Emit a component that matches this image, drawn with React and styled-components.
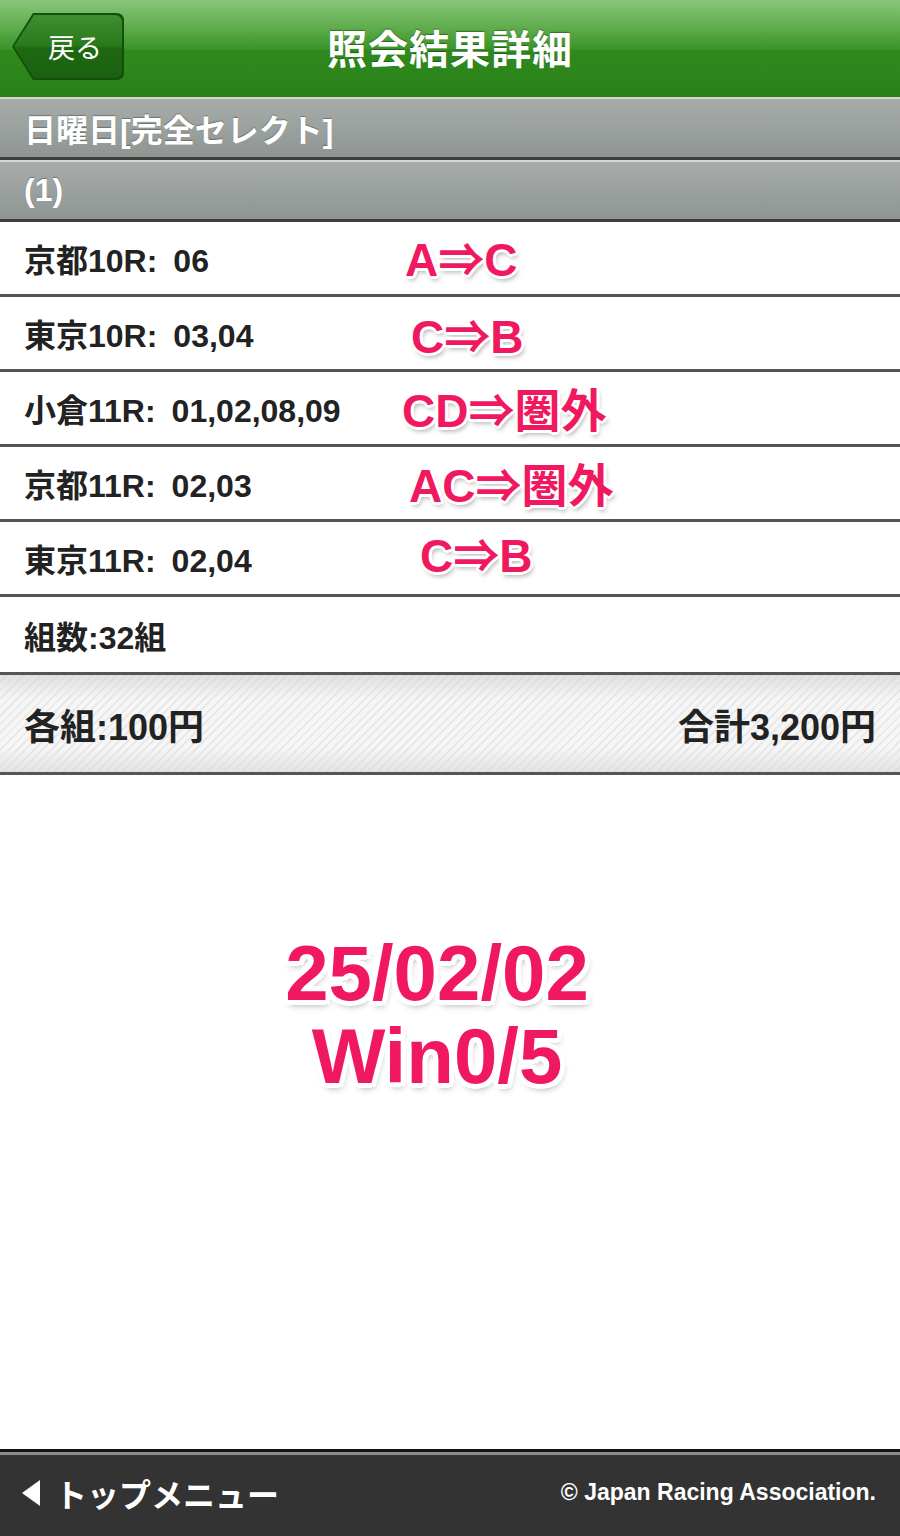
import React from "react";
import styled, { createGlobalStyle } from "styled-components";

const GlobalStyle = createGlobalStyle`
    html, body {
        margin: 0;
        padding: 0;
        background: #fff;
    }
    body {
        font-family: "Liberation Sans", "Noto Sans CJK JP", sans-serif;
        -webkit-font-smoothing: antialiased;
    }
`;

const PINK = "#f0185e";

const Page = styled.div`
    display: flex;
    flex-direction: column;
    min-height: 100vh;
    width: 900px;
    background: #fff;
`;

// header
const Header = styled.header`
    display: grid;
    grid-template-columns: 1fr auto 1fr;
    align-items: center;
    height: 97px;
    padding: 0 12px 4px;
    box-sizing: border-box;
    background: linear-gradient(
        to bottom,
        #8ac57b 0%,
        #5dab4a 30%,
        #3b9529 50%,
        #2f8a1d 52%,
        #2a8118 100%
    );
`;

const BackOuter = styled.div`
    width: 112px;
    height: 67px;
    display: flex;
    background: #144f0b;
    clip-path: path("M21 0 H104 Q112 0 112 8 V59 Q112 67 104 67 H21 L0 33.5 Z");
`;

const BackInner = styled.div`
    margin: 2px;
    flex: 1;
    display: flex;
    align-items: center;
    justify-content: center;
    padding-left: 14px;
    background: linear-gradient(to bottom, #3f8e30 0%, #2a7a1d 48%, #1f6912 52%, #1b6010 100%);
    clip-path: path("M20 0 H100 Q108 0 108 8 V55 Q108 63 100 63 H20 L0 31.5 Z");
    color: #fff;
    font-size: 27px;
    font-weight: normal;
`;

const Title = styled.h1`
    margin: 0;
    color: #fff;
    font-size: 40px;
    font-weight: bold;
    letter-spacing: 1px;
    text-shadow: 0 -1px 1px rgba(0, 0, 0, 0.35);
`;

// grey section bars
const Section = styled.div`
    display: flex;
    align-items: center;
    height: ${(p) => p.$h}px;
    padding-left: 24px;
    border-top: 2px solid #d3d6d4;
    border-bottom: 3px solid #3e3e3e;
    background: linear-gradient(to bottom, #a7aca9, #8f9692);
    color: #fff;
    font-size: 32px;
    font-weight: bold;
    text-shadow: 0 -1px 1px rgba(0, 0, 0, 0.3);
`;

// result rows
const Row = styled.div`
    display: grid;
    grid-template-columns: 378px 1fr;
    align-items: center;
    height: ${(p) => p.$h || 72}px;
    padding-left: 24px;
    border-bottom: 3px solid #555;
    color: #222;
    font-size: 32px;
    font-weight: bold;
`;

const Note = styled.span`
    color: ${PINK};
    font-size: 46px;
    font-weight: bold;
    white-space: nowrap;
    transform: translate(${(p) => p.$dx}px, ${(p) => p.$dy}px);
    text-shadow: 3px 0 0 #fff, -3px 0 0 #fff, 0 3px 0 #fff, 0 -3px 0 #fff,
        2px 2px 0 #fff, -2px 2px 0 #fff, 2px -2px 0 #fff, -2px -2px 0 #fff,
        2px 4px 5px rgba(0, 0, 0, 0.35);
`;

const Summary = styled.div`
    display: flex;
    justify-content: space-between;
    align-items: center;
    height: 97px;
    padding: 0 24px;
    border-bottom: 3px solid #555;
    background: linear-gradient(
            to bottom,
            rgba(210, 210, 210, 0.6) 0%,
            rgba(255, 255, 255, 0) 25%,
            rgba(255, 255, 255, 0) 75%,
            rgba(215, 215, 215, 0.6) 100%
        ),
        repeating-linear-gradient(135deg, #f6f6f6 0px, #f6f6f6 4px, #e9e9e9 4px, #e9e9e9 6px);
    color: #222;
    font-size: 36px;
    font-weight: bold;
`;

// big stamp text
const Stamp = styled.div`
    display: flex;
    flex-direction: column;
    align-items: center;
    margin-top: 157px;
    padding-right: 26px;
    color: ${PINK};
    font-size: 78px;
    line-height: 83px;
    font-weight: bold;
    text-shadow: 5px 0 0 #fff, -5px 0 0 #fff, 0 5px 0 #fff, 0 -5px 0 #fff,
        4px 4px 0 #fff, -4px 4px 0 #fff, 4px -4px 0 #fff, -4px -4px 0 #fff,
        2px 5px 7px rgba(0, 0, 0, 0.35);
`;

// footer
const Footer = styled.footer`
    margin-top: auto;
    display: flex;
    justify-content: space-between;
    align-items: center;
    height: 87px;
    padding: 0 24px 3px 22px;
    box-sizing: border-box;
    border-top: 3px solid #141414;
    box-shadow: inset 0 3px 0 #8c8c8c;
    background: #333;
    color: #fff;
    font-weight: bold;
`;

const MenuLink = styled.div`
    display: flex;
    align-items: center;
    gap: 15px;
    font-size: 32px;
`;

const Copy = styled.div`
    font-size: 23px;
`;

const rows = [
    { label: "京都10R:\u200206", note: "A⇒C", dx: 3, dy: -2 },
    { label: "東京10R:\u200203,04", note: "C⇒B", dx: 9, dy: 0 },
    { label: "小倉11R:\u200201,02,08,09", note: "CD⇒圏外", dx: 0, dy: -1 },
    { label: "京都11R:\u200202,03", note: "AC⇒圏外", dx: 7, dy: -1 },
    { label: "東京11R:\u200202,04", note: "C⇒B", dx: 18, dy: -6 },
];

export default function App() {
    return (
        <Page>
            <GlobalStyle />
            <Header>
                <BackOuter>
                    <BackInner>戻る</BackInner>
                </BackOuter>
                <Title>照会結果詳細</Title>
                <div />
            </Header>

            <Section $h={58}>日曜日[完全セレクト]</Section>
            <Section $h={57}>(1)</Section>

            {rows.map((r) => (
                <Row key={r.label}>
                    <span>{r.label}</span>
                    <Note $dx={r.dx} $dy={r.dy}>
                        {r.note}
                    </Note>
                </Row>
            ))}
            <Row $h={75}>
                <span>組数:32組</span>
            </Row>

            <Summary>
                <span>各組:100円</span>
                <span>合計3,200円</span>
            </Summary>

            <Stamp>
                <span>25/02/02</span>
                <span>Win0/5</span>
            </Stamp>

            <Footer>
                <MenuLink>
                    <svg width="18" height="26" viewBox="0 0 18 26">
                        <polygon points="18,0 18,26 0,13" fill="#fff" />
                    </svg>
                    トップメニュー
                </MenuLink>
                <Copy>© Japan Racing Association.</Copy>
            </Footer>
        </Page>
    );
}
